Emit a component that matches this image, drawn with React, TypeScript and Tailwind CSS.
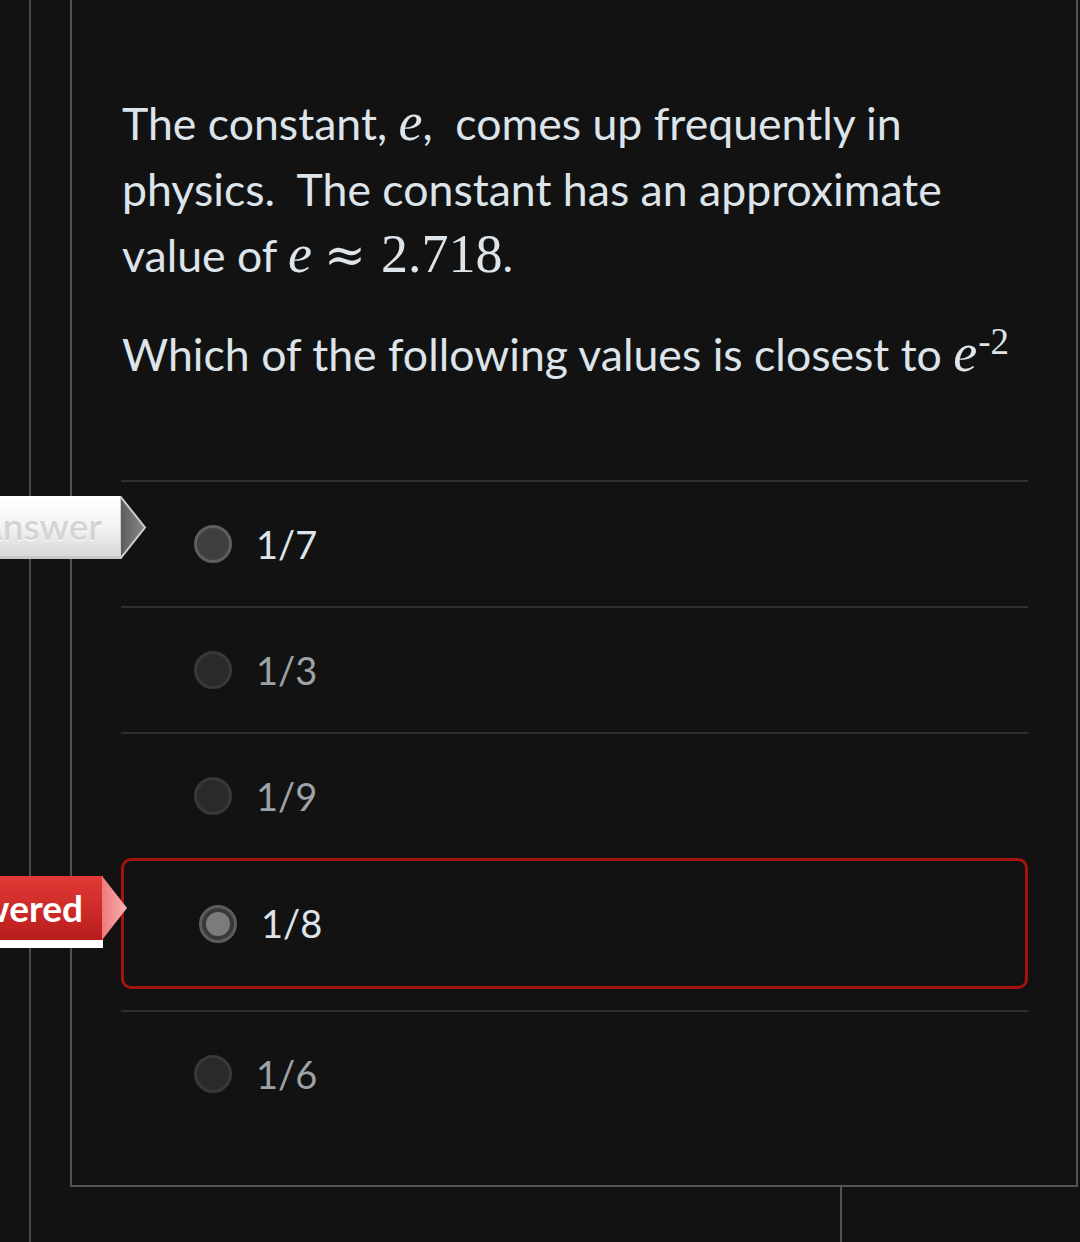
import React from 'react';

type Answer = { label: string; state: 'correct' | 'selected' | 'plain' };

const answers: Answer[] = [
  { label: '1/7', state: 'correct' },
  { label: '1/3', state: 'plain' },
  { label: '1/9', state: 'plain' },
  { label: '1/8', state: 'selected' },
  { label: '1/6', state: 'plain' },
];

function MathE() {
  return <span className="font-['Liberation_Serif',serif] italic text-[54px] leading-none">e</span>;
}

function Radio({ state }: { state: Answer['state'] }) {
  if (state === 'selected') {
    return (
      <div className="flex items-center justify-center w-[38px] h-[38px] rounded-full border-[3px] border-[#5c5c5c] bg-[#393939]">
        <div className="w-[24px] h-[24px] rounded-full bg-[#7b7b7b]" />
      </div>
    );
  }
  if (state === 'correct') {
    return <div className="w-[38px] h-[38px] rounded-full border-[3px] border-[#5e5e5e] bg-[#3f3f3f]" />;
  }
  return <div className="w-[38px] h-[38px] rounded-full border-[3px] border-[#383838] bg-[#2a2a2a]" />;
}

function AnswerRow({ answer }: { answer: Answer }) {
  const bright = answer.state !== 'plain';
  return (
    <div className="flex items-center gap-[24px] h-full pl-[73px]">
      <Radio state={answer.state} />
      <span className={bright ? 'text-[38px] text-[#dde4ea]' : 'text-[38px] text-[#9da2a7]'}>{answer.label}</span>
    </div>
  );
}

export default function App() {
  return (
    <div className="relative w-[1080px] h-[1242px] overflow-hidden bg-[#121212] font-['Lato','Noto_Sans',sans-serif]">
      <div className="flex h-full pl-[29px]">
        <div className="flex flex-col border-l-2 border-[#4a4a4a] pl-[39px]">
          {/* question panel */}
          <div className="w-[1008px] h-[1187px] border-l-2 border-r-2 border-b-2 border-[#535353] pl-[50px] pr-[46px] pt-[90px]">
            <p className="text-[44.6px] leading-[66px] text-[#dde4ea]">
              The constant, <MathE />,&nbsp; comes up frequently in physics.&nbsp; The constant has an approximate
              value of <MathE />
              <span className="font-['DejaVu_Serif',serif] text-[50px] leading-none ml-[12px] mr-[15px]">≈</span>
              <span className="font-['Liberation_Serif',serif] text-[54px] leading-none">2.718</span>.
            </p>
            <p className="mt-[33px] text-[44.6px] leading-[66px] text-[#dde4ea]">
              Which of the following values is closest to <MathE />
              <sup className="font-['Liberation_Serif',serif] text-[37px] leading-none top-[-0.45em] ml-[1px]">-2</sup>
            </p>

            <div className="mt-[93px] w-[907px] -ml-[1px]">
              <div className="h-[126px] border-t-2 border-[#2e2e2e]">
                <AnswerRow answer={answers[0]} />
              </div>
              <div className="h-[126px] border-t-2 border-[#2e2e2e]">
                <AnswerRow answer={answers[1]} />
              </div>
              <div className="h-[126px] border-t-2 border-[#2e2e2e]">
                <AnswerRow answer={answers[2]} />
              </div>
              <div className="h-[131px] rounded-[10px] border-[3px] border-[#a3140f] pl-[2px]">
                <AnswerRow answer={answers[3]} />
              </div>
              <div className="h-[21px]" />
              <div className="h-[126px] border-t-2 border-[#2e2e2e]">
                <AnswerRow answer={answers[4]} />
              </div>
            </div>
          </div>
          <div className="flex-1 pl-[770px]">
            <div className="h-full border-l-2 border-[#535353]" />
          </div>
        </div>
      </div>

      {/* Correct answer tag */}
      <div className="absolute left-0 top-[496px] flex items-center">
        <div className="flex items-center justify-end w-[121px] h-[63px] overflow-hidden pr-[19px] bg-gradient-to-b from-white via-[#f4f4f4] to-[#d8d8d8] border-b-[3px] border-[#c8c8c8]">
          <span className="whitespace-nowrap text-[37px] font-semibold text-[#d4d4d4] [text-shadow:0_1px_0_#ffffff]">Correct Answer</span>
        </div>
        <svg width="27" height="63" viewBox="0 0 27 63" className="-ml-px">
          <defs>
            <linearGradient id="ca" x1="0" y1="0" x2="1" y2="0">
              <stop offset="0" stopColor="#5a5a5a" />
              <stop offset="1" stopColor="#8a8a8a" />
            </linearGradient>
          </defs>
          <polygon points="0,0 25,31.5 0,63" fill="url(#ca)" stroke="#cfcfcf" strokeWidth="2" />
        </svg>
      </div>

      {/* You answered tag */}
      <div className="absolute left-0 top-[876px]">
        <div className="flex items-center">
          <div className="flex items-center justify-end w-[103px] h-[64px] overflow-hidden pr-[20px] bg-gradient-to-b from-[#e23a36] to-[#b81c1c]">
            <span className="whitespace-nowrap text-[37px] font-bold text-white">You Answered</span>
          </div>
          <svg width="26" height="64" viewBox="0 0 26 64" className="-ml-px">
            <defs>
              <linearGradient id="ya" x1="0" y1="0" x2="1" y2="0">
                <stop offset="0" stopColor="#f07a7a" />
                <stop offset="1" stopColor="#f8b0b0" />
              </linearGradient>
            </defs>
            <polygon points="0,0 25,32 0,64" fill="url(#ya)" />
          </svg>
        </div>
        <div className="w-[103px] h-[8px] bg-white" />
      </div>
    </div>
  );
}
